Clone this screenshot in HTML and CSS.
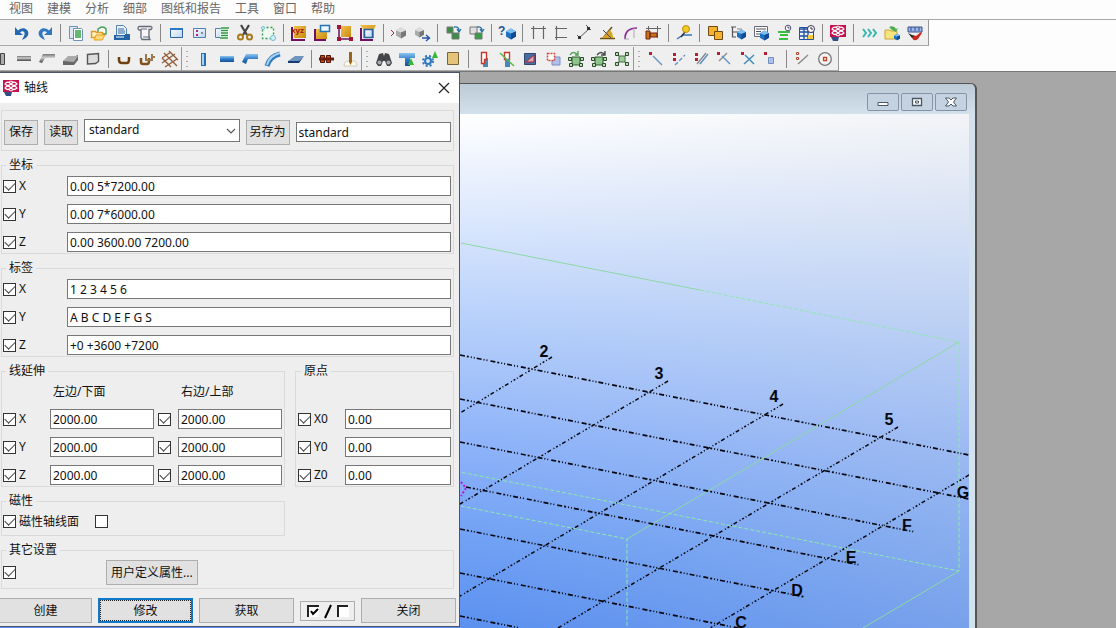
FILE: index.html
```html
<!DOCTYPE html>
<html lang="zh-CN">
<head>
<meta charset="utf-8">
<title>轴线</title>
<link rel="stylesheet" href="styles.css">
</head>
<body>
<svg class="defs" aria-hidden="true">
  <defs>
    <linearGradient id="gold" x1="0" y1="0" x2="1" y2="1"><stop offset="0" stop-color="#f2c14a"/><stop offset="1" stop-color="#c98a10"/></linearGradient>
    <linearGradient id="blue" x1="0" y1="0" x2="0" y2="1"><stop offset="0" stop-color="#8cc4f0"/><stop offset=".5" stop-color="#2f7cc8"/><stop offset="1" stop-color="#164f94"/></linearGradient>
    <linearGradient id="steel" x1="0" y1="0" x2="0" y2="1"><stop offset="0" stop-color="#777"/><stop offset=".4" stop-color="#ccc"/><stop offset="1" stop-color="#444"/></linearGradient>
    <linearGradient id="pane" x1="0" y1="0" x2="1" y2="1"><stop offset="0" stop-color="#fff"/><stop offset="1" stop-color="#b8d4f2"/></linearGradient>
    <symbol id="cube" viewBox="0 0 10 11"><path d="M0 3 5 0l5 3v5l-5 3-5-3z" fill="#1f6fc0"/><path d="M0 3 5 0l5 3-5 2z" fill="#7fc0f4"/><path d="m5 5 5-2v5l-5 3z" fill="#104a90"/></symbol>
    <symbol id="greycube" viewBox="0 0 10 11"><path d="M0 3 5 0l5 3v5l-5 3-5-3z" fill="#aaa"/><path d="M0 3 5 0l5 3-5 2z" fill="#ddd"/><path d="m5 5 5-2v5l-5 3z" fill="#777"/></symbol>
    <symbol id="logo" viewBox="0 0 18 18"><path d="M1 1h16v12H1z" fill="#c8104e"/><path d="M2 13h8l-1 4H4z" fill="#2f4f86"/><path d="M3 5c2-3 4-2 6 0s4 2 6 0c-2-3-4-2-6 0s-4 2-6 0zM3 9c2-3 4-2 6 0s4 2 6 0c-2-3-4-2-6 0s-4 2-6 0z" fill="none" stroke="#fff" stroke-width="1.200"/><path d="m7 3 2-1 2 1M7 11l2 1 2-1" fill="none" stroke="#fff"/></symbol>
    <symbol id="group" viewBox="0 0 18 18"><path d="M5 7h8v8H5z" fill="#8cc48c" stroke="#2f5f2f"/><path d="M1.500 7.500h3v3h-3zM13.500 7.500h3v3h-3zM2.500 13.500h3v3h-3zM12.500 13.500h3v3h-3z" fill="#bde0b5" stroke="#2b4b2b"/></symbol>
  </defs>
</svg>

<nav class="menu">
  <a href="#">视图</a><a href="#">建模</a><a href="#">分析</a><a href="#">细部</a><a href="#">图纸和报告</a><a href="#">工具</a><a href="#">窗口</a><a href="#">帮助</a>
</nav>

<div class="toolrow">
  <div class="toolbar first">
    <button class="tool" aria-label="撤销"><svg viewBox="0 0 18 18"><path d="M2 3v8h8L7 8.500c3-3 6 0 4 3.500l-2 4c6-2 8-7 5-10-2.500-2.500-6-2-9 .5z" fill="#2268b4"/></svg></button>
    <button class="tool" aria-label="重做"><svg viewBox="0 0 18 18"><path d="M16 3v8H8l3-2.500c-3-3-6 0-4 3.500l2 4c-6-2-8-7-5-10 2.500-2.500 6-2 9 .5z" fill="#2f78c0"/></svg></button>
    <i class="sep"></i>
    <button class="tool" aria-label="复制"><svg viewBox="0 0 18 18"><path d="M2.500 2.500h8v12h-8z" fill="#dce9f5" stroke="#6f93b5"/><path d="M6.500 4.500h8l1 1v11h-9z" fill="#fff" stroke="#6f93b5"/><path d="M8 7h6M8 9h6M8 11h6M8 13h6" stroke="#35a040" stroke-width="1.300"/></svg></button>
    <button class="tool" aria-label="打开"><svg viewBox="0 0 18 18"><path d="M8 5q5-4 8 0v5H8z" fill="#fff" stroke="#44a050" stroke-width="1.400"/><path d="M1.500 7.500h4l1 1h6v5h-11z" fill="#fff0bc" stroke="#e09c22" stroke-width="1.400"/><path d="m4 16 2-5h9l-3 5z" fill="#ffd978" stroke="#e0a022"/></svg></button>
    <button class="tool" aria-label="报告"><svg viewBox="0 0 18 18"><path d="M3.500 1.500h7l3 3v9h-10z" fill="#e9f2fc" stroke="#5384b0"/><path d="M5 5h6M5 7h7M5 9h7" stroke="#35699b"/><path d="M1 11h11v5H1zM12 10h5v6h-5z" fill="#2464a4"/><path d="M3 13h8" stroke="#fff"/></svg></button>
    <button class="tool" aria-label="图纸"><svg viewBox="0 0 18 18"><path d="M3 2.500h12q2 1 0 3h-2v8l1 2H6l-1-2V6H3q-2-2 0-3.500z" fill="#f6f6f6" stroke="#606a78" stroke-width="1.300"/><path d="M5 5h6M7 13h7" stroke="#606a78"/></svg></button>
    <i class="sep"></i>
    <button class="tool" aria-label="视图窗口"><svg viewBox="0 0 18 18"><path d="M3.500 4.500h12v9h-12z" fill="url(#pane)" stroke="#2c64a4"/><path d="M3 4h13v2H3z" fill="#2c78c8"/></svg></button>
    <button class="tool" aria-label="视图属性"><svg viewBox="0 0 18 18"><path d="M3.500 4.500h12v9h-12z" fill="url(#pane)" stroke="#4d7fb2"/><path d="M6 6h2v2H6zM6 10h2v2H6z" fill="#b0208c"/><path d="M11 9h2" stroke="#333"/></svg></button>
    <button class="tool" aria-label="视图列表"><svg viewBox="0 0 18 18"><path d="M2.500 4.500h6v9h-6z" fill="url(#pane)" stroke="#4d7fb2"/><path d="M8 3h8v12H7z" fill="#fff"/><path d="M8 4h8M8 6.500h7M8 9h7M8 11.500h7M7 14h8" stroke="#2f9840" stroke-width="1.300"/></svg></button>
    <button class="tool" aria-label="剪切"><svg viewBox="0 0 18 18"><path d="m5 1 6 10M13 1 7 11" stroke="#444" stroke-width="2.200"/><circle cx="4.500" cy="13" r="2.500" fill="none" stroke="#a87a1c" stroke-width="2"/><circle cx="13.500" cy="13" r="2.500" fill="none" stroke="#a87a1c" stroke-width="2"/></svg></button>
    <button class="tool" aria-label="选择区域"><svg viewBox="0 0 18 18"><path d="M3.500 3.500h11v11h-11z" fill="#effaf0" stroke="#2f9850" stroke-width="1.300" stroke-dasharray="2 2"/><circle cx="14" cy="14" r="2.500" fill="#d5f0fa" stroke="#78bfd0"/><circle cx="4" cy="4" r="1.500" fill="#d5f0fa" stroke="#78bfd0"/></svg></button>
    <i class="sep"></i>
    <button class="tool" aria-label="坐标"><svg viewBox="0 0 18 18"><path d="M2 3v13h13" fill="none" stroke="#701060" stroke-width="2"/><path d="M4 2h12v12H4z" fill="url(#gold)"/><text x="1" y="9" class="xyz">xyz</text></svg></button>
    <button class="tool" aria-label="工作平面"><svg viewBox="0 0 18 18"><path d="M2 5v11h11" fill="none" stroke="#701060" stroke-width="2"/><path d="M3 5h11v10H3z" fill="url(#gold)"/><path d="M7.500 1.500h9v6h-9z" fill="#eaf5fd" stroke="#2673b5" stroke-width="1.500"/></svg></button>
    <button class="tool" aria-label="两点平面"><svg viewBox="0 0 18 18"><path d="M3 2v13h12" fill="none" stroke="#701060" stroke-width="1.500"/><path d="M5 2h10v11H5z" fill="url(#gold)"/><path d="M1 1h4v4H1zM1 13h4v4H1zM13 13h4v4h-4z" fill="#a01434"/></svg></button>
    <button class="tool" aria-label="视图平面"><svg viewBox="0 0 18 18"><path d="M2 4v12h12" fill="none" stroke="#701060" stroke-width="2"/><path d="M1 1h16l-2 4v9H4V5z" fill="url(#gold)"/><path d="M5.500 5.500h8v8h-8z" fill="url(#pane)" stroke="#2a609c" stroke-width="1.500"/></svg></button>
    <i class="sep"></i>
    <button class="tool" aria-label="复制对象"><svg viewBox="0 0 18 18"><path d="m1 6 3 3-3 3" fill="none" stroke="#b02030"/><use href="#greycube" x="6" y="3" width="10" height="12"/></svg></button>
    <button class="tool" aria-label="移动对象"><svg viewBox="0 0 18 18"><use href="#greycube" x="2" y="3" width="9" height="11"/><path d="M9 14h7M13 11l3.500 3-3.500 3" fill="none" stroke="#2455a8" stroke-width="1.400"/></svg></button>
    <i class="sep"></i>
    <button class="tool" aria-label="特殊复制"><svg viewBox="0 0 18 18"><path d="M3 3h6v6H3zM8 9h7v6H8z" fill="#3a8c46" stroke="#777"/><path d="M10 3q5-1 5 4M13 5l2 3 2-3" fill="none" stroke="#2673a5" stroke-width="1.300"/></svg></button>
    <button class="tool" aria-label="特殊移动"><svg viewBox="0 0 18 18"><path d="M3 3h7v7H3z" fill="#e0e0e4" stroke="#777"/><path d="M8 9h7v6H8z" fill="#3a9c46" stroke="#777"/><path d="M10 3q5-1 5 4M13 5l2 3 2-3" fill="none" stroke="#2673a5" stroke-width="1.300"/></svg></button>
    <i class="sep"></i>
    <button class="tool" aria-label="查询"><svg viewBox="0 0 18 18"><text x="0" y="11" class="query">?</text><use href="#cube" x="8" y="4" width="10" height="12"/></svg></button>
    <i class="sep"></i>
    <button class="tool" aria-label="水平尺寸"><svg viewBox="0 0 18 18"><path d="M4.500 2v13M14.500 2v13M2 4.500h15" fill="none" stroke="#666" stroke-width="1.200"/></svg></button>
    <button class="tool" aria-label="垂直尺寸"><svg viewBox="0 0 18 18"><path d="M4.500 2v14M3 4.500h12M3 13.500h12" fill="none" stroke="#666" stroke-width="1.200"/></svg></button>
    <button class="tool" aria-label="自由尺寸"><svg viewBox="0 0 18 18"><path d="M3 15 15 4M11 1l5 5M2 11l4 4" fill="none" stroke="#555"/><path d="M12 3h3v3h-3zM3 12h3v3H3z" fill="#333"/></svg></button>
    <button class="tool" aria-label="角度尺寸"><svg viewBox="0 0 18 18"><path d="M2 14.500h15M5 14 14 3" stroke="#6d5415" stroke-width="1.500"/><path d="m4 14 8-8q3 3 3 8z" fill="#d7a326"/><path d="m5 6 8 8" stroke="#444"/></svg></button>
    <button class="tool" aria-label="曲线尺寸"><svg viewBox="0 0 18 18"><path d="M4 15q0-11 12-11" fill="none" stroke="#8c2c94" stroke-width="1.700"/><path d="M13 4v10M3 15h5" stroke="#aaa"/></svg></button>
    <button class="tool" aria-label="螺栓尺寸"><svg viewBox="0 0 18 18"><path d="M2 4.500h15M4.500 2v4M13.500 2v12" stroke="#666"/><path d="M2 7h4v8H2zM6 9h7v4H6z" fill="#c87414" stroke="#702010"/></svg></button>
    <i class="sep"></i>
    <button class="tool" aria-label="辅助点"><svg viewBox="0 0 18 18"><path d="m2 15 6-4h9" fill="none" stroke="#3577ba" stroke-width="1.500"/><path d="m10 8-4 5" stroke="#333" stroke-width="1.500"/><circle cx="11" cy="5" r="3.500" fill="#f2cb24" stroke="#bc8a12"/></svg></button>
    <i class="sep"></i>
    <button class="tool" aria-label="目录"><svg viewBox="0 0 18 18"><path d="M2.500 2.500h9v9h-9z" fill="#f6b22c" stroke="#704a10"/><path d="M8.500 7.500h8v8h-8z" fill="#f6b22c" stroke="#704a10"/></svg></button>
    <button class="tool" aria-label="模型树"><svg viewBox="0 0 18 18"><path d="M2 3h5M3.500 3v10H7M3.500 8H9" fill="none" stroke="#555" stroke-width="1.200"/><path d="M8 5h5" stroke="#888"/><use href="#cube" x="8" y="5" width="9" height="11"/></svg></button>
    <button class="tool" aria-label="模型列表"><svg viewBox="0 0 18 18"><path d="M2.500 2.500h13v10h-13z" fill="#fff" stroke="#667"/><path d="M4 5h10M4 7.500h5M4 10h5" stroke="#556"/><use href="#cube" x="8" y="6" width="9" height="11"/></svg></button>
    <button class="tool" aria-label="进度"><svg viewBox="0 0 18 18"><path d="M3 8h12M5 11h8M4 15h9" stroke="#3bbd42" stroke-width="2"/><circle cx="13" cy="4" r="2.800" fill="#fff" stroke="#557"/><path d="M13 2.500V4h1.500" fill="none" stroke="#335"/></svg></button>
    <button class="tool" aria-label="任务管理"><svg viewBox="0 0 18 18"><path d="M1.500 3.500h14v12h-14z" fill="#eaf2ff" stroke="#2450a0"/><path d="M2 5h14M2 8h14M2 12h14M6 4v12M10 4v12" stroke="#2450a0" stroke-width="1.300"/><path d="M10 11h5v4h-5z" fill="#f5cb36"/><circle cx="13" cy="5" r="3.500" fill="#fff" stroke="#335"/><path d="M13 3v2h2" fill="none" stroke="#335"/></svg></button>
    <i class="sep"></i>
    <button class="tool" aria-label="结构"><svg viewBox="0 0 18 18"><use href="#logo"/></svg></button>
    <i class="sep"></i>
    <button class="tool" aria-label="更多"><svg viewBox="0 0 18 18"><path d="m3 5 3 4-3 4M8 5l3 4-3 4M13 5l3 4-3 4" fill="none" stroke="#36b5b3" stroke-width="2"/></svg></button>
    <button class="tool" aria-label="模型文件夹"><svg viewBox="0 0 18 18"><path d="M2 6h5l1 1h6v8H2z" fill="#f8e37c" stroke="#c9a430"/><path d="M6 3q5-2 7 2l2-1-2 4-4-2z" fill="#4cae4f"/><use href="#cube" x="11" y="9" width="6" height="8"/></svg></button>
    <button class="tool" aria-label="清理"><svg viewBox="0 0 18 18"><path d="M2 3h14v5H2z" fill="#98b5e8" stroke="#3b4f8c"/><path d="M5 3v4M9 3v4M13 3v4" stroke="#3b4f8c"/><path d="m7 11 3 1 5-4 1 1-4 6q-4 3-6-1z" fill="#c92b22"/><path d="m2 9 6 3-2 2z" fill="#222"/></svg></button>
  </div>
</div>

<div class="toolrow second">
  <div class="toolbar">
    <button class="tool cut" aria-label="混凝土柱"><svg viewBox="0 0 18 18"><path d="M8.500 3.500h4v11h-4z" fill="#aaa" stroke="#444"/></svg></button>
    <button class="tool" aria-label="混凝土梁"><svg viewBox="0 0 18 18"><path d="M2 6h14v5H2z" fill="url(#steel)"/></svg></button>
    <button class="tool" aria-label="混凝土折梁"><svg viewBox="0 0 18 18"><path d="m1 12 4-8h12v4H7l-3 5z" fill="url(#steel)"/></svg></button>
    <button class="tool" aria-label="混凝土板"><svg viewBox="0 0 18 18"><path d="M2 11v4h11l4-5V5z" fill="#666"/><path d="m2 11 5-5h10l-4 6z" fill="#aaa"/></svg></button>
    <button class="tool" aria-label="混凝土面板"><svg viewBox="0 0 18 18"><path d="m3.500 4.500 11-1v8l-3 2-8 .5z" fill="#ddd" stroke="#555" stroke-width="1.400"/></svg></button>
    <i class="sep"></i>
    <button class="tool" aria-label="钢筋"><svg viewBox="0 0 18 18"><path d="M4 7v3q0 3 3 3h5q2 0 2-4V7" fill="none" stroke="#70410f" stroke-width="2.500"/></svg></button>
    <button class="tool" aria-label="钢筋组"><svg viewBox="0 0 18 18"><path d="M3 8v4q0 2 2 2h4q2 0 2-3V8" fill="none" stroke="#80511d" stroke-width="2.500"/><path d="M8 4v6h6V4M13 7h4" fill="none" stroke="#9a7a4d" stroke-width="2"/></svg></button>
    <button class="tool" aria-label="钢筋网"><svg viewBox="0 0 18 18"><path d="m1 8 9-6M1 13 14 4M4 17l12-8M3 3l13 13M8 1l9 9M1 8l9 9" stroke="#925b39" stroke-width="1.300"/></svg></button>
    <i class="grip"></i>
    <button class="tool" aria-label="钢柱"><svg viewBox="0 0 18 18"><path d="M6 3h5v13H6z" fill="#256fb9"/><path d="M7 4h2v11H7z" fill="#a8d4f5"/></svg></button>
    <button class="tool" aria-label="钢梁"><svg viewBox="0 0 18 18"><path d="M2 6h14v6H2z" fill="url(#blue)"/></svg></button>
    <button class="tool" aria-label="折梁"><svg viewBox="0 0 18 18"><path d="m1 12 4-8h12v5H7l-2 5z" fill="url(#blue)"/></svg></button>
    <button class="tool" aria-label="曲梁"><svg viewBox="0 0 18 18"><path d="M3 16Q6 6 16 4" fill="none" stroke="#2f79bd" stroke-width="5"/><path d="M3 15Q5 6 16 3" fill="none" stroke="#a8d4f5" stroke-width="2"/></svg></button>
    <button class="tool" aria-label="多边形板"><svg viewBox="0 0 18 18"><path d="m1 11 7-5h9l-5 5z" fill="#6e94bf"/><path d="M1 11v2h11l5-7-5 5z" fill="#153b75"/></svg></button>
    <i class="sep"></i>
    <button class="tool" aria-label="螺栓"><svg viewBox="0 0 18 18"><path d="M2.500 5.500h4v7h-4zM8.500 5.500h4v7h-4z" fill="#c4502a" stroke="#4f1608"/><path d="M1 9h15" stroke="#6b1c0c" stroke-width="3"/></svg></button>
    <button class="tool" aria-label="焊缝"><svg viewBox="0 0 18 18"><path d="M3 16q0-5 5-5h4q4 0 4 5z" fill="#fffbe8" stroke="#ccb"/><path d="M8 2h3v10l-1.500 3L8 12z" fill="#98661b"/></svg></button>
    <i class="grip"></i>
    <button class="tool" aria-label="查找"><svg viewBox="0 0 18 18"><path d="m4 4 4-1 1 3 1-3 4 1 3 9-2 3h-3l-2-5H8l-2 5H3l-2-3z" fill="#44484c"/><circle cx="4.500" cy="12.500" r="2" fill="#aaa"/><circle cx="13.500" cy="12.500" r="2" fill="#aaa"/></svg></button>
    <button class="tool" aria-label="节点"><svg viewBox="0 0 18 18"><path d="M1 3h16v5h-5v8H7V8H1z" fill="url(#blue)"/><path d="m13 8 3 7h-6z" fill="#36b738"/></svg></button>
    <button class="tool" aria-label="自动连接"><svg viewBox="0 0 18 18"><circle cx="7" cy="11" r="5" fill="none" stroke="#3076b8" stroke-width="2" stroke-dasharray="2 2"/><circle cx="7" cy="11" r="3" fill="#d2e9fa" stroke="#3076b8" stroke-width="2"/><path d="m14 1 3 7h-6z" fill="#36b738"/></svg></button>
    <button class="tool" aria-label="组件目录"><svg viewBox="0 0 18 18"><path d="M3.500 2.500h11v12h-11z" fill="#e4c47a" stroke="#78643a"/></svg></button>
    <i class="sep"></i>
    <button class="tool" aria-label="对齐切割"><svg viewBox="0 0 18 18"><path d="M8 8h5v9H8z" fill="#4a86b8"/><path d="M6.500 2.500h5v7h-2v4h-3z" fill="#fff" stroke="#c33a2a" stroke-width="1.400"/></svg></button>
    <button class="tool" aria-label="线切割"><svg viewBox="0 0 18 18"><path d="M6.500 2.500h5v7h-5z" fill="#fff" stroke="#c33a2a" stroke-width="1.400"/><path d="M7 9h5v8H7z" fill="#4a86b8"/><path d="m2 3 14 13" stroke="#55b84b" stroke-width="1.500"/></svg></button>
    <button class="tool" aria-label="多边形切割"><svg viewBox="0 0 18 18"><path d="M3.500 3.500h11v11h-11z" fill="#456fa5" stroke="#334568"/><path d="m5 12 8-7v7z" fill="#d9a8b0" stroke="#b02230"/></svg></button>
    <button class="tool" aria-label="零件切割"><svg viewBox="0 0 18 18"><path d="M8 7h8v8H8z" fill="#aebfeb" stroke="#7a8fc0"/><path d="M3.500 3.500h7v7h-7z" fill="#fff" stroke="#d14836" stroke-width="1.500" stroke-dasharray="2 1"/></svg></button>
    <button class="tool" aria-label="添加到构件"><svg viewBox="0 0 18 18"><use href="#group"/><path d="M3 5q3-5 8 0m0-4v4H8" fill="none" stroke="#53a057" stroke-width="1.400"/></svg></button>
    <button class="tool" aria-label="从构件移除"><svg viewBox="0 0 18 18"><use href="#group"/><path d="M7 5q4-5 8 0m0-4v4h-4" fill="none" stroke="#454b45" stroke-width="1.400"/></svg></button>
    <button class="tool" aria-label="炸开构件"><svg viewBox="0 0 18 18"><path d="m3 3 12 12M15 3 3 15" stroke="#333"/><path d="M6 6h6v6H6z" fill="#9dce99" stroke="#456b45"/><path d="M2.500 2.500h3v3h-3zM12.500 2.500h3v3h-3zM2.500 12.500h3v3h-3zM12.500 12.500h3v3h-3z" fill="#bde0b5" stroke="#2b4b2b"/></svg></button>
    <i class="grip"></i>
    <button class="tool" aria-label="沿线点"><svg viewBox="0 0 18 18"><path d="M2 2h3v3H2z" fill="#b51f36"/><path d="m6 6 9 9" stroke="#5c8fc4" stroke-width="1.300"/></svg></button>
    <button class="tool" aria-label="延长点"><svg viewBox="0 0 18 18"><path d="M3 3h3v3H3zM3 8h3v3H3z" fill="#b51f36"/><path d="m5 15 10-10" stroke="#5c8fc4" stroke-width="1.300" stroke-dasharray="4 2"/></svg></button>
    <button class="tool" aria-label="平行点"><svg viewBox="0 0 18 18"><path d="M2 3h3v3H2zM2 8h3v3H2z" fill="#b51f36"/><path d="M4 14 13 3" stroke="#888" stroke-width="1.300"/><path d="m7 14 8-10" stroke="#5c8fc4" stroke-width="1.500"/></svg></button>
    <button class="tool" aria-label="投影点"><svg viewBox="0 0 18 18"><path d="M1 2h3v3H1z" fill="#b51f36"/><path d="m3 11 8-8" stroke="#888" stroke-width="1.300"/><path d="m6 6 8 8" stroke="#5c8fc4" stroke-width="1.300"/></svg></button>
    <button class="tool" aria-label="交点"><svg viewBox="0 0 18 18"><path d="M2 2h3v3H2z" fill="#b51f36"/><path d="m5 14 10-9M6 5l9 9" stroke="#438bbd" stroke-width="1.500"/></svg></button>
    <button class="tool" aria-label="平面交点"><svg viewBox="0 0 18 18"><path d="M2 2h3v3H2z" fill="#b51f36"/><path d="M6.500 7.500h5v6h-5z" fill="#a9c2ee" stroke="#7590c0"/></svg></button>
    <i class="sep"></i>
    <button class="tool" aria-label="辅助线"><svg viewBox="0 0 18 18"><path d="M3.500 2.500h2v2h-2zM3.500 7.500h2v2h-2z" fill="#fff" stroke="#c2452f"/><path d="m5 14 10-9" stroke="#888" stroke-width="1.400"/></svg></button>
    <button class="tool" aria-label="辅助圆"><svg viewBox="0 0 18 18"><circle cx="9" cy="9" r="6.300" fill="#f4f4f4" stroke="#777" stroke-width="1.300"/><path d="M7.500 7.500h3v3h-3z" fill="#fff" stroke="#c2452f" stroke-width="1.300"/></svg></button>
  </div>
</div>

<main class="workspace">
  <section class="view">
    <header class="view-title">
      <button aria-label="最小化"><svg viewBox="0 0 14 12"><path d="M2 6.500h10v3H2z" fill="#fff" stroke="#4a5662"/></svg></button>
      <button aria-label="最大化"><svg viewBox="0 0 14 12"><path d="M2.500 2.500h9v7h-9z" fill="#fff" stroke="#4a5662" stroke-width="1.300"/><path d="M5.500 5h3v2h-3z" fill="none" stroke="#4a5662"/></svg></button>
      <button aria-label="关闭视图"><svg viewBox="0 0 14 12"><path d="M1.500 2h3.500l2 2 2-2h3.500L9.500 6l3 4H9L7 8l-2 2H1.500l3-4z" fill="#fff" stroke="#4a5662"/></svg></button>
    </header>
    <div class="canvas">
      <svg viewBox="0 114 969 514" preserveAspectRatio="xMaxYMin slice">
        <g class="box">
          <path class="solid" d="M461 243 700 290M627 539 959 342M863 628l96-57"/>
          <path d="M700 290 959 342V571L460 472M461 506l166 33v89"/>
        </g>
        <path class="marker" d="m461 482 5 6-5 8"/>
        <path class="axis" d="M460 355 969 455M460 399 969 499M460 442l455 90M466 487l394 78M460 529l345 68M460 573l283 56M460 616l60 12"/>
        <path class="axis cross" d="M552 357 460 413M668 381 460 504M783 404 460 596M898 427 558 628M969 475 710 628"/>
        <g class="mark">
          <text x="544" y="357">2</text><text x="659" y="379">3</text><text x="774" y="402">4</text><text x="889" y="425">5</text>
          <text x="963" y="498">G</text><text x="907" y="531">F</text><text x="851" y="563">E</text><text x="797" y="596">D</text><text x="741" y="628">C</text>
        </g>
      </svg>
    </div>
  </section>
</main>

<form class="dialog">
  <header class="dialog-title">
    <svg viewBox="0 0 18 18"><use href="#logo"/></svg>
    <h1>轴线</h1>
    <button type="button" class="close" aria-label="关闭窗口"><svg viewBox="0 0 12 12"><path d="m1 1 10 10M11 1 1 11" stroke="#222" stroke-width="1.200"/></svg></button>
  </header>
  <div class="dialog-body">
    <div class="group presets">
      <button type="button" class="btn">保存</button>
      <button type="button" class="btn">读取</button>
      <span class="combo"><select aria-label="读取"><option>standard</option></select><svg viewBox="0 0 10 6"><path d="m1 1 4 4 4-4" fill="none" stroke="#555" stroke-width="1.200"/></svg></span>
      <button type="button" class="btn wide">另存为</button>
      <input type="text" aria-label="另存为" value="standard">
    </div>

    <fieldset class="group">
      <legend>坐标</legend>
      <div class="rows">
        <label><input type="checkbox" checked>X</label><input type="text" aria-label="坐标 X" value="0.00 5*7200.00">
        <label><input type="checkbox" checked>Y</label><input type="text" aria-label="坐标 Y" value="0.00 7*6000.00">
        <label><input type="checkbox" checked>Z</label><input type="text" aria-label="坐标 Z" value="0.00 3600.00 7200.00">
      </div>
    </fieldset>

    <fieldset class="group">
      <legend>标签</legend>
      <div class="rows">
        <label><input type="checkbox" checked>X</label><input type="text" aria-label="标签 X" value="1 2 3 4 5 6">
        <label><input type="checkbox" checked>Y</label><input type="text" aria-label="标签 Y" value="A B C D E F G S">
        <label><input type="checkbox" checked>Z</label><input type="text" aria-label="标签 Z" value="+0 +3600 +7200">
      </div>
    </fieldset>

    <div class="columns">
      <fieldset class="group">
        <legend>线延伸</legend>
        <div class="rows extend">
          <span class="head">左边/下面</span><span class="head">右边/上部</span>
          <label><input type="checkbox" checked>X</label><input type="text" aria-label="X 左边" value="2000.00"><input type="checkbox" aria-label="X 右边启用" checked><input type="text" aria-label="X 右边" value="2000.00">
          <label><input type="checkbox" checked>Y</label><input type="text" aria-label="Y 左边" value="2000.00"><input type="checkbox" aria-label="Y 右边启用" checked><input type="text" aria-label="Y 右边" value="2000.00">
          <label><input type="checkbox" checked>Z</label><input type="text" aria-label="Z 左边" value="2000.00"><input type="checkbox" aria-label="Z 右边启用" checked><input type="text" aria-label="Z 右边" value="2000.00">
        </div>
      </fieldset>
      <fieldset class="group offset">
        <legend>原点</legend>
        <div class="rows origin">
          <label><input type="checkbox" checked>X0</label><input type="text" aria-label="原点 X0" value="0.00">
          <label><input type="checkbox" checked>Y0</label><input type="text" aria-label="原点 Y0" value="0.00">
          <label><input type="checkbox" checked>Z0</label><input type="text" aria-label="原点 Z0" value="0.00">
        </div>
      </fieldset>
      <fieldset class="group">
        <legend>磁性</legend>
        <div class="line magnet">
          <label><input type="checkbox" checked>磁性轴线面</label>
          <input type="checkbox" aria-label="磁性">
        </div>
      </fieldset>
    </div>

    <fieldset class="group">
      <legend>其它设置</legend>
      <div class="line other">
        <input type="checkbox" aria-label="用户定义属性启用" checked>
        <button type="button" class="btn">用户定义属性...</button>
      </div>
    </fieldset>

    <footer class="actions">
      <button type="button" class="btn">创建</button>
      <button type="button" class="btn default">修改</button>
      <button type="button" class="btn">获取</button>
      <button type="button" class="btn toggle" aria-label="全选或全不选"><svg viewBox="0 0 46 16"><path d="M3 14V3h11" fill="none" stroke="#222" stroke-width="2"/><path d="M4 4h10v10H4z" fill="#fff"/><path d="m6 8 2 3 5-5" fill="none" stroke="#000" stroke-width="2"/><path d="m20 15 6-13" stroke="#000" stroke-width="2"/><path d="M33 14V3h10" fill="none" stroke="#222" stroke-width="2"/><path d="M34 4h10v10H34z" fill="#fff"/></svg></button>
      <button type="button" class="btn">关闭</button>
    </footer>
  </div>
</form>
</body>
</html>
```
FILE: styles.css
```css
* { box-sizing: border-box; }

body {
  margin: 0;
  height: 100vh;
  display: flex;
  flex-direction: column;
  overflow: hidden;
  position: relative;
  background: #fdfdfd;
  color: #111;
  font: 12px/16px "Noto Sans", "Noto Sans CJK SC", sans-serif;
}

button, input, select { font: inherit; color: inherit; margin: 0; }
svg { display: block; }
.defs { position: absolute; width: 0; height: 0; }

/* Menu */
.menu {
  display: flex;
  gap: 14px;
  height: 19px;
  padding: 1px 0 0 9px;
  flex: none;
}
.menu a { color: #666; text-decoration: none; }

/* Toolbars */
.toolrow {
  display: flex;
  height: 27px;
  flex: none;
  border-top: 1px solid #a8a8a8;
}
.toolrow.second { height: 26px; border-top: 0; border-bottom: 1px solid #777; }
.toolbar {
  display: flex;
  align-items: center;
  padding-right: 2px;
  background: #efefef;
  border-right: 1px solid #999;
  border-bottom: 1px solid #aaa;
}
.toolbar.first { padding-left: 10px; }
.second .toolbar { padding-top: 1px; }
.tool {
  flex: none;
  width: 23px;
  height: 22px;
  padding: 0;
  border: 0;
  background: none;
  display: grid;
  place-items: center;
}
.tool.cut { margin-left: -11px; }
.tool svg { width: 18px; height: 18px; overflow: visible; }
.sep { flex: none; width: 8px; height: 18px; display: flex; justify-content: center; }
.sep::before { content: ""; width: 1px; background: #888; }
.grip {
  flex: none;
  width: 11px;
  height: 24px;
  border-left: 1px solid #999;
  background: radial-gradient(circle, #aaa 1px, transparent 1px) 3px 2px / 4px 5px no-repeat, radial-gradient(circle, #aaa 1px, transparent 1px) 3px 7px / 4px 5px no-repeat, radial-gradient(circle, #aaa 1px, transparent 1px) 3px 12px / 4px 5px no-repeat, radial-gradient(circle, #aaa 1px, transparent 1px) 3px 17px / 4px 5px no-repeat;
}
.xyz { font: bold 8px "Liberation Sans", sans-serif; fill: #a01010; }
.query { font: bold 12px "Liberation Sans", sans-serif; fill: #1f4f9c; }

/* Model view */
.workspace {
  flex: 1;
  min-height: 0;
  display: flex;
  padding: 11px 139px 0 0;
  background: #a7a7a7;
}
.view {
  flex: 1;
  display: flex;
  flex-direction: column;
  padding-right: 6px;
  border-top: 1px solid #555;
  border-right: 2px solid #555;
  border-radius: 0 6px 0 0;
  background: linear-gradient(#bccad6, #d3e1ec 30px, #d3e3ee);
}
.view-title {
  display: flex;
  justify-content: flex-end;
  align-items: center;
  gap: 2px;
  height: 30px;
  padding: 6px 2px 0 0;
  flex: none;
}
.view-title button {
  width: 32px;
  height: 18px;
  padding: 0;
  display: grid;
  place-items: center;
  border: 1px solid #8494a6;
  border-radius: 2px;
  background: #c5d3e0;
}
.view-title svg { width: 14px; height: 12px; }
.canvas {
  flex: 1;
  min-height: 0;
  background:
    linear-gradient(90deg, transparent 50%, rgba(205, 210, 220, .25)),
    linear-gradient(#fff, #dce8fd 20%, #b4cefb 42%, #8eb3f9 64%, #6fa0f4 84%, #5c91f0);
}
.canvas svg { width: 100%; height: 100%; }
.box path { fill: none; stroke: #8ee8ae; stroke-dasharray: 4 2; }
.box .solid { stroke-dasharray: none; stroke: #8cd8a4; }
.marker { fill: none; stroke: #c010e0; stroke-width: 2; stroke-dasharray: 2 2; }
.axis { fill: none; stroke: #05070f; stroke-width: 1.7; stroke-dasharray: 5 2 2 2 1 2 1 2 5 2 1 2 1 3; }
.axis.cross { stroke-width: 1.5; stroke-dasharray: 4 2 1 2 2 2 1 3; }
.mark { font: bold 16px "Liberation Sans", sans-serif; text-anchor: middle; fill: #05070f; }

/* Dialog window */
.dialog {
  position: absolute;
  left: 0;
  top: 72px;
  width: 460px;
  display: flex;
  flex-direction: column;
  border: solid #4a5568;
  border-width: 1px 1px 1px 0;
  background: #eee;
}
.dialog-title {
  display: flex;
  align-items: center;
  gap: 4px;
  height: 30px;
  padding: 0 9px 0 2px;
  background: #fff;
}
.dialog-title svg { width: 18px; height: 18px; }
.dialog-title h1 { margin: 0; flex: 1; font: inherit; }
.close { padding: 0; border: 0; background: none; }
.dialog-title .close svg { width: 12px; height: 12px; }

.dialog-body {
  display: flex;
  flex-direction: column;
  gap: 6px;
  padding: 7px 5px 3px 1px;
}
.group {
  min-width: 0;
  margin: 0;
  padding: 0 2px 1px 1px;
  border: 1px solid #dadada;
}
.group.offset { padding-left: 2px; }
legend { height: 16px; margin-left: 3px; padding: 0 3px; }

input[type="text"], select {
  width: 100%;
  min-width: 0;
  height: 20px;
  padding: 1px 2px 0;
  border: 1px solid #777;
  border-radius: 0;
  background: #fff;
  outline: 0;
}
input[type="checkbox"] {
  appearance: none;
  flex: none;
  width: 13px;
  height: 13px;
  border: 1px solid #333;
  background: #fff;
  display: grid;
  place-items: center;
}
input[type="checkbox"]:checked::before {
  content: "";
  width: 9px;
  height: 5px;
  margin-top: -3px;
  border: solid #444;
  border-width: 0 0 1px 1px;
  transform: rotate(-45deg);
}
label { display: flex; align-items: center; gap: 3px; }

.btn {
  height: 25px;
  padding: 0 4px;
  border: 1px solid #adadad;
  background: #e1e1e1;
  white-space: nowrap;
}
.presets {
  display: grid;
  grid-template-columns: 34px 34px 1fr 44px 1fr;
  gap: 6px;
  align-items: center;
  height: 41px;
  padding: 3px 2px 0;
}
.presets .btn { padding: 0; }
.combo { position: relative; margin-bottom: 4px; }
.combo select { display: block; height: 23px; padding: 0 4px; appearance: none; }
.combo svg { position: absolute; right: 4px; top: 9px; width: 10px; height: 6px; pointer-events: none; }

.rows {
  display: grid;
  grid-template-columns: 64px 1fr;
  row-gap: 8px;
  align-items: center;
  padding-top: 3px;
}
.columns {
  display: grid;
  grid-template-columns: 284px 1fr;
  gap: 6px 10px;
}
.rows.extend { grid-template-columns: 47px 1fr 24px 1fr; padding-top: 5px; }
.extend > input[type="checkbox"] { margin-left: 4px; }
.head { height: 17px; padding-left: 3px; }
.head:first-child { grid-column: 2; }
.head:nth-child(2) { grid-column: 4; }
.rows.origin { grid-template-columns: 47px 1fr; padding-top: 30px; }
.line { display: flex; align-items: center; }
.magnet { gap: 16px; height: 25px; }
.other { gap: 90px; height: 29px; }

.actions {
  display: grid;
  grid-template-columns: 92fr 95fr 95fr 55fr 95fr;
  gap: 6px;
  align-items: center;
  margin: 3px -2px 0 -1px;
}
.actions .btn:first-child { border-left: 0; }
.btn.default { border: 2px solid #0f78c8; outline: 1px dotted #222; outline-offset: -3px; }
.btn.toggle { height: 20px; padding: 0; display: grid; place-items: center; background: #eee; }
.toggle svg { width: 46px; height: 16px; }
```
